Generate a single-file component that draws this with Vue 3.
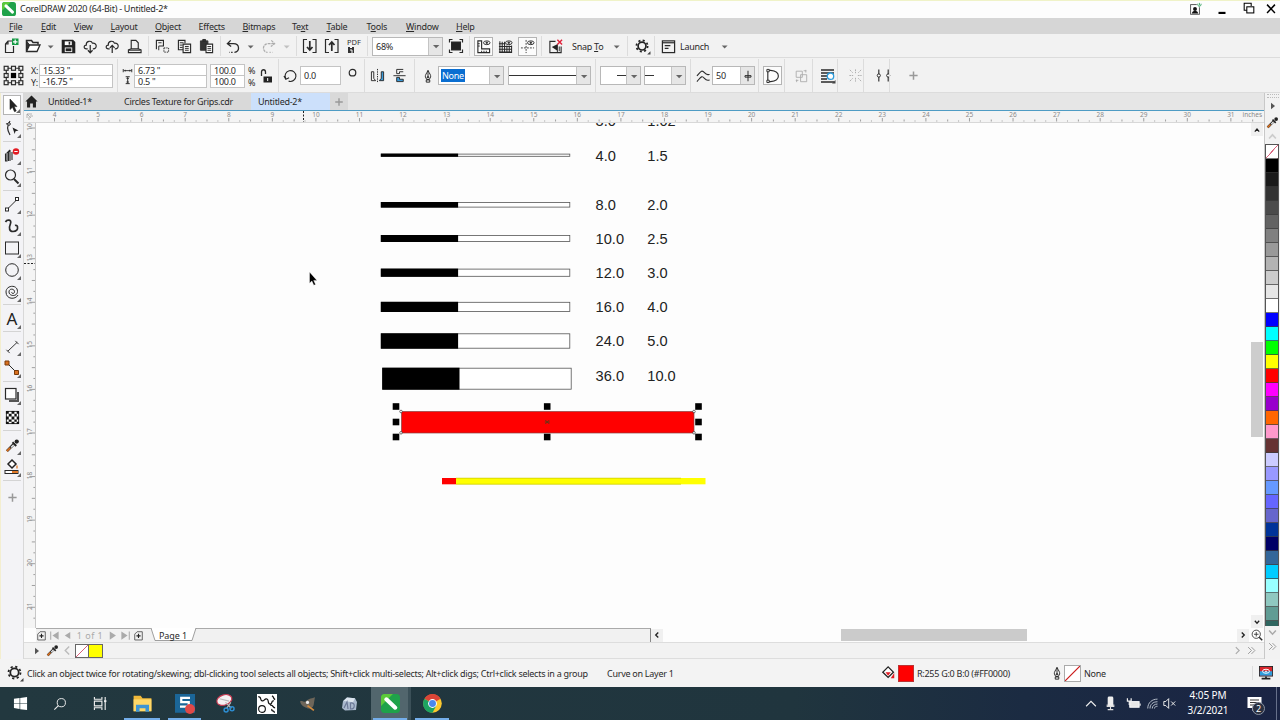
<template>
  <div class="app">
    <header class="titlebar">
      <Icon name="logo" :size="14" />
      <span class="title">CorelDRAW 2020 (64-Bit) - Untitled-2*</span>
      <div class="window-buttons">
        <Icon name="account" :size="14" />
        <Icon name="minimize" :size="14" />
        <Icon name="restore" :size="14" />
        <Icon name="close" :size="14" />
      </div>
    </header>

    <nav class="menubar">
      <span v-for="m in menus" :key="m.text" class="menu-item" :style="{ width: m.w + 'px' }">
        {{ m.text.slice(0, m.key) }}<u>{{ m.text[m.key] }}</u>{{ m.text.slice(m.key + 1) }}
      </span>
    </nav>

    <div v-for="(bar, b) in [standardBar, propertyBar]" :key="b" class="toolbar" :class="{ property: b === 1 }">
      <template v-for="(t, i) in bar" :key="i">
        <i v-if="t.sep" class="sep" :style="{ marginLeft: t.sep[0] + 'px', marginRight: t.sep[1] + 'px' }"></i>
        <div v-else-if="t.combo !== undefined" class="combo" :style="{ width: t.w + 'px' }">
          <span class="combo-value" :class="t.kind"><span>{{ t.combo }}</span></span>
          <span class="combo-button">
            <Icon :name="t.kind === 'spin' ? 'slider' : 'caret'" :size="12" />
          </span>
        </div>
        <div v-else-if="t.pair" class="pair" :class="{ boxed: t.boxed }" :style="{ width: t.w + 'px' }">
          <span v-for="(p, k) in t.pair" :key="k">{{ p }}</span>
        </div>
        <div v-else-if="t.field" class="field" :style="{ width: t.w + 'px' }">{{ t.field }}</div>
        <span v-else-if="t.text" class="bar-text" :style="{ width: t.w + 'px' }">
          {{ t.text.slice(0, t.key) }}<u>{{ t.text[t.key] }}</u>{{ t.text.slice(t.key + 1) }}
        </span>
        <div v-else class="tool" :class="{ on: t.on, off: t.off }" :style="{ width: t.w + 'px' }">
          <Icon v-if="t.icon" :name="t.icon" :size="t.size || 16" />
        </div>
      </template>
    </div>

    <main class="workspace">
      <aside class="toolbox">
        <template v-for="(t, i) in toolbox" :key="i">
          <i v-if="t.sep" class="rule" :style="{ marginTop: t.sep[0] + 'px', marginBottom: t.sep[1] + 'px' }"></i>
          <div v-else class="side-tool" :class="{ picked: t.on, fly: t.fly }">
            <Icon :name="t.icon" :size="t.size || 16" />
          </div>
        </template>
      </aside>

      <section class="document">
        <div class="tabs">
          <Icon class="home" name="home" :size="12" />
          <span class="tab first">Untitled-1*</span>
          <span class="tab second">Circles Texture for Grips.cdr</span>
          <span class="tab active">Untitled-2*</span>
          <span class="tab-add"><Icon name="plus" :size="10" /></span>
        </div>

        <svg class="hruler" viewBox="24 111 1240 12" width="1240" height="12">
          <path d="M24 122.500h1240" stroke="#d8d8d8" />
          <path d="M27 114l4 4M27 118v-4h5M30 116h3M29 117v3" fill="none" stroke="#999" stroke-width="0.7" />
          <path :d="hTicks" stroke="#8a8a8a" stroke-width="0.8" />
          <text v-for="n in hLabels" :key="n.v" :x="n.p" y="117.3" text-anchor="middle">{{ n.v }}</text>
          <text x="1242.500" y="117.3">inches</text>
          <path d="M303.500 111v11" stroke="#222" stroke-dasharray="2 1.500" />
        </svg>

        <div class="view">
          <svg class="vruler" viewBox="24 123 12 505" width="12" height="505">
            <path d="M35.500 123v505" stroke="#c8c8c8" />
            <path :d="vTicks" stroke="#8a8a8a" stroke-width="0.8" />
            <text
              v-for="n in vLabels"
              :key="n.v"
              :transform="`translate(31.500 ${n.p - 1}) rotate(-90)`"
              text-anchor="middle"
            >{{ n.v }}</text>
            <path d="M24 263.500h11" stroke="#222" stroke-dasharray="2 1.500" />
          </svg>

          <svg class="canvas" viewBox="36 123 1215 505" width="1215" height="505">
            <g v-for="r in rows" :key="r.label">
              <template v-if="r.h">
                <rect :x="r.x + 0.5" :y="r.y + 0.5" width="188.500" :height="r.h - 1" fill="#fff" stroke="#555" stroke-width="0.8" />
                <rect :x="r.x" :y="r.y" width="77.300" :height="r.h" fill="#000" />
              </template>
              <text x="595.600" :y="r.base">{{ r.label }}</text>
              <text x="647.300" :y="r.base">{{ r.size }}</text>
            </g>

            <rect x="401.500" y="411.500" width="292.500" height="21.500" fill="#f00" stroke="#8a4040" stroke-width="0.7" />
            <g v-for="y in [406.5, 422, 437]" :key="y">
              <template v-for="x in [396, 547.2, 698.500]" :key="x">
                <rect v-if="!(x === 547.2 && y === 422)" :x="x - 3.3" :y="y - 3.3" width="6.600" height="6.600" fill="#000" />
              </template>
            </g>
            <g v-for="y in [411.5, 432.8]" :key="'n' + y" fill="#fff" stroke="#222" stroke-width="0.6">
              <circle cx="401" :cy="y" r="1.300" />
              <circle cx="694" :cy="y" r="1.300" />
            </g>
            <path d="M545.300 420l4 4M549.300 420l-4 4M544.800 422h5" stroke="#5a3a1a" stroke-width="0.9" />

            <rect x="442" y="478" width="14" height="6.300" fill="#f00" />
            <rect x="456" y="478" width="249.500" height="6.300" fill="#ff0" />
            <path d="M456 478.200h225M456 484.200h225" stroke="#c9c900" stroke-width="0.7" />

            <path d="M309.500 272v11.200l2.400-2.200 1.900 4.300 1.800-.8-1.900-4.100h3.300z" fill="#000" stroke="#fff" stroke-width="0.4" />
          </svg>

          <div class="vscroll">
            <span class="scroll-button"><Icon name="up" :size="10" /></span>
            <span class="vthumb"></span>
            <span class="scroll-button"><Icon name="down" :size="10" /></span>
          </div>
        </div>

        <div class="bottom-row">
          <div class="pager">
            <Icon name="addPage" :size="11" />
            <Icon name="first" :size="11" />
            <Icon name="prev" :size="11" />
            <span class="page-count">1 of 1</span>
            <Icon name="next" :size="11" />
            <Icon name="last" :size="11" />
            <Icon name="addPage" :size="11" />
            <div class="page-tab">
              <svg viewBox="0 0 46 14" width="46" height="14">
                <path d="M0 0L4 12.500H41L45 0" fill="#fff" stroke="#888" stroke-width="0.8" />
              </svg>
              <span>Page 1</span>
            </div>
          </div>
          <div class="hscroll">
            <span class="scroll-button"><Icon name="left" :size="10" /></span>
            <span class="hthumb"></span>
            <span class="scroll-button right"><Icon name="right" :size="10" /></span>
            <Icon name="zoomPage" :size="12" />
          </div>
        </div>

        <div class="doc-palette">
          <Icon name="play" :size="8" />
          <Icon name="dropper" :size="13" />
          <Icon name="chevLeft" :size="9" />
          <span class="chip none"></span>
          <span class="chip yellow"></span>
          <div class="doc-palette-end">
            <Icon name="chevRight" :size="9" />
            <Icon name="chevRight2" :size="9" />
          </div>
        </div>
      </section>

      <aside class="palette">
        <i class="grip"></i>
        <Icon name="play" :size="8" />
        <Icon class="pal-dropper" name="dropper" :size="13" />
        <Icon name="chevUp" :size="9" />
        <div class="swatches">
          <span class="swatch none"></span>
          <span v-for="c in colors" :key="c" class="swatch" :style="{ background: c }"></span>
        </div>
        <Icon name="chevDown" :size="9" />
        <Icon class="more" name="chevRight2" :size="9" />
      </aside>
    </main>

    <footer class="status">
      <Icon name="gear" :size="16" />
      <span class="hint">Click an object twice for rotating/skewing; dbl-clicking tool selects all objects; Shift+click multi-selects; Alt+click digs; Ctrl+click selects in a group</span>
      <span class="selection">Curve on Layer 1</span>
      <div class="fill-info">
        <Icon name="fill" :size="14" />
        <span class="fill-chip"></span>
        <span class="fill-text">R:255 G:0 B:0 (#FF0000)</span>
      </div>
      <div class="outline-info">
        <Icon name="pen" :size="14" />
        <span class="outline-chip"></span>
        <span>None</span>
      </div>
      <div class="proof"><Icon name="monitor" :size="14" /></div>
    </footer>

    <div class="taskbar">
      <div v-for="a in apps" :key="a.icon" class="task" :class="{ open: a.open, current: a.current }" :style="{ width: a.w + 'px' }">
        <Icon :name="a.icon" :size="a.size" />
      </div>
      <div class="tray">
        <Icon name="trayUp" :size="12" />
        <Icon name="mic" :size="15" />
        <Icon name="battery" :size="15" />
        <Icon name="wifi" :size="12" />
        <Icon name="mute" :size="13" />
      </div>
      <div class="clock"><span>4:05 PM</span><span>3/2/2021</span></div>
      <div class="notes">
        <Icon name="note" :size="16" />
        <span class="badge">2</span>
      </div>
      <i class="desktop-edge"></i>
    </div>
  </div>
</template>

<script setup>
import { h } from 'vue'

// Inner markup of every glyph, drawn on a 16 unit grid
const icons = {
  logo: '<rect x="0" y="0" width="16" height="16" rx="3" fill="#1fa24a" stroke="none"/><path d="M0 3a3 3 0 0 1 3-3h7L0 10z" fill="#5cc93a" stroke="none"/><path d="M4.500 4.500l7.500 7" stroke="#fff" stroke-width="3.500" stroke-linecap="round"/>',
  account: '<rect x="3" y="3" width="10" height="11" stroke="#444"/><path d="M4.500 13c0-4 7-4 7 0z" fill="#111" stroke="none"/><circle cx="8" cy="8" r="2.200" fill="#111" stroke="none"/><path d="M10 1v5h5V3z" fill="#fff" stroke="none"/><path d="M11 2c0 4 4 4 4 0M13 1v3" stroke="#2a9d5a"/>',
  minimize: '<path d="M4 12.500h8" stroke="#000" stroke-width="2.500"/>',
  restore: '<path d="M5.500 9.500h-3v-8h8v3" stroke="#000" stroke-width="1.200"/><rect x="5.500" y="5.500" width="8" height="7" stroke="#000" stroke-width="1.200"/>',
  close: '<path d="M3.500 3l9 9.500M12.500 3l-9 9.500" stroke="#000" stroke-width="1.700"/>',
  caret: '<path d="M4 6.500h8.500L8.200 11z" fill="#666" stroke="none"/>',
  newDoc: '<path d="M10 3H5L2.500 6v8.500h8V8M5 3v3H2.500" stroke-width="1.200"/><rect x="9" y="0.500" width="6.500" height="6.500" fill="#149a44" stroke="none"/><path d="M12.200 1.500v4.500M10 3.800h4.500" stroke="#fff" stroke-width="1.200"/>',
  open: '<path d="M1.500 13V2.500h5L8 4.500h5V6.500" stroke-width="1.500"/><path d="M1.500 3v10l3-6z" fill="#333"/><path d="M1.500 13.500L4.500 7H15l-3 6.500z" fill="#fff" stroke-width="1.300"/>',
  save: '<path d="M1.500 1.500h11l2 2v11h-13z" fill="#222" stroke="#222" stroke-width="1.500"/><rect x="4" y="2.500" width="7.500" height="4" fill="#fff" stroke="none"/><rect x="4.500" y="9.500" width="7" height="4" fill="#222" stroke="#fff" stroke-width="0.900"/><path d="M9 3v3" stroke-width="1.700"/>',
  cloudDown: '<path d="M5 10.500H3.500c-3 0-3-4 0-4C3 2 9 1 10 4.500c5-1 5.500 6 1 6H10.500" stroke-width="1.200"/><path d="M7.700 6.500v8M5.200 12l2.500 2.700 2.500-2.700" stroke-width="1.300"/>',
  cloudUp: '<path d="M5 10.500H3.500c-3 0-3-4 0-4C3 2 9 1 10 4.500c5-1 5.500 6 1 6H10.500" stroke-width="1.200"/><path d="M7.700 15V7M5.200 9.500l2.500-2.700 2.500 2.700" stroke-width="1.300"/>',
  print: '<path d="M4.500 10.500v-9h5L12 4v6.500M1.500 14.500v-3l3-1h7.500l3 1v3z" stroke-width="1.200"/><path d="M2 12h12.500"/>',
  cut: '<path d="M1.500 11V1.500H9v6H4" stroke-width="1.200"/><path d="M3.500 4h3.500M4 7.500V12" /><rect x="9.500" y="9.500" width="5" height="4.500" stroke-dasharray="1.500 1"/>',
  copy: '<path d="M6.500 11.500h-5V1.500h7v3" stroke-width="1.200"/><path d="M3 4h4M3 6.500h3M3 9h3"/><path d="M6.500 5.500h8v9h-8z" stroke-width="1.200"/><path d="M8.500 8h4M8.500 10h4M8.500 12h4"/>',
  paste: '<path d="M1.500 2h8v10h-8z" fill="#333" stroke="#333"/><path d="M4 0.500h3v2H4z" fill="#333"/><path d="M7.500 5.500h7v9h-7z" fill="#fff" stroke-width="1.200"/><path d="M9 8h4M9 10h4M9 12h4"/>',
  undo: '<path d="M5 1.500L1.500 5l4 3M2 5h6c7 0 7 9 1 9.200" stroke-width="1.400"/><path d="M7 14.200H3.500" stroke-dasharray="1.500 1.500" stroke-width="1.300"/>',
  redo: '<path d="M11 1.500L14.500 5l-4 3M14 5H8c-7 0-7 9-1 9.200" stroke-width="1.300" stroke-dasharray="3 0.800"/><path d="M9 14.200h3.500" stroke-dasharray="1.500 1.500"/>',
  importIcon: '<path d="M5 1.500H1.500v13H5M10.500 1.500H14v13h-3.500" stroke-width="1.200"/><path d="M7.800 3v9M5 9l2.800 3L10.500 9" stroke-width="1.700"/>',
  exportIcon: '<path d="M5 1.500H1.500v13H5M10.500 1.500H14v13h-3.500" stroke-width="1.200"/><path d="M7.800 13V4M5 7l2.800-3L10.500 7" stroke-width="1.700"/>',
  pdf: '<text x="1" y="7.200" font-family="Noto Sans" font-size="7.800" letter-spacing="0" fill="#333" stroke="none" textLength="14" lengthAdjust="spacingAndGlyphs">PDF</text><rect x="2" y="9" width="6" height="6" fill="#333" stroke="none"/><path d="M4 12h2v3M4 9.500h2" stroke="#fff"/>',
  full: '<path d="M1.500 4.500v-3h3M11.500 1.500h3v3M14.500 11.500v3h-3M4.500 14.500h-3v-3" stroke-width="1.200"/><rect x="3.500" y="4" width="9" height="8" fill="#222"/>',
  rulers: '<path d="M2 2h4v8.500h8.500v4H2z" stroke-width="1.200"/><path d="M2 5h2M2 7.500h2M6 12.500v2M8.500 12.500v2M11 12.500v2"/><ellipse cx="11.500" cy="4" rx="3.500" ry="2"/><circle cx="11.500" cy="4" r="0.800" fill="#222"/>',
  grid: '<path d="M2 2.500v12h12M4.500 3v11M7 3v11M9.500 7v8M12 7v8M14.500 7v8M1 5h7M1 8h14M1 11h14M1 14h14" stroke-width="1.100"/><ellipse cx="11.500" cy="4" rx="3.500" ry="2" fill="#f2f2f2"/><circle cx="11.500" cy="4" r="0.800" fill="#222"/>',
  guides: '<path d="M1 9.500h14M6.500 1v14" stroke-dasharray="2 1.200" stroke-width="0.900"/><ellipse cx="11.500" cy="4" rx="3.500" ry="2"/><circle cx="11.500" cy="4" r="0.800" fill="#222"/>',
  snapOff: '<path d="M8 2.500H2v12h12V8" stroke-width="1.200"/><path d="M4 8.500l6-3v7z" fill="#222" stroke="none"/><path d="M10 5.500v8.500M12 8v5"/><path d="M10 0.800l5 5M15 0.800l-5 5" stroke="#e0203a" stroke-width="1.500"/>',
  gear: '<circle cx="7.500" cy="7.500" r="4.200" stroke="#222" stroke-width="1.800"/><circle cx="7.500" cy="7.500" r="6" stroke="#222" stroke-width="1.800" stroke-dasharray="2.200 2.510"/><path d="M16.500 13v3.500H13z" fill="#444" stroke="none"/>',
  launch: '<rect x="1.500" y="2" width="13" height="12.500" stroke-width="1.300"/><path d="M1.500 4h13" stroke-width="1.300"/><path d="M4 7h6M4 10h4" stroke-width="1.300"/>',
  origin: '<g stroke-width="0.900"><path d="M3.500 2.500h3M10 2.500h3M3.500 13.500h3M10 13.500h3M2.500 4v3M2.500 9v3M13.500 4v3M13.500 9v3"/><rect x="0.900" y="1" width="3" height="3"/><rect x="6.500" y="1" width="3" height="3"/><rect x="12.100" y="1" width="3" height="3"/><rect x="0.900" y="6.500" width="3" height="3"/><rect x="12.100" y="6.500" width="3" height="3"/><rect x="0.900" y="12" width="3" height="3"/><rect x="6.500" y="12" width="3" height="3"/><rect x="12.100" y="12" width="3" height="3"/></g><rect x="6" y="6" width="4" height="4" fill="#000" stroke="none"/>',
  extents: '<path d="M1.500 0v4M12 0v4M2 2h10M4 1v2M9.500 1v2" stroke-width="1.100"/><path d="M4.500 9.500h5M4.500 18h5M7 10v7.500M5.500 11.500h3M5.500 16h3" stroke-width="1.200"/>',
  lock: '<path d="M2.500 8V4c0-3 4-3 4 0v2" stroke-width="1.300"/><rect x="4.500" y="8.500" width="8.500" height="6" fill="#222" stroke="none"/><path d="M8.700 10v3" stroke="#fff"/>',
  rotate: '<path d="M3 11.500a5.800 5.800 0 1 1 3 2.500M1 8.500l2 3.500 3.500-1.500" stroke-width="1.200"/>',
  degree: '<circle cx="8" cy="5" r="3.500" stroke-width="1.300"/>',
  mirrorH: '<path d="M1.500 4v9.500H6L4 11V4z"/><path d="M14.500 4v9.500H10l2-2.500V4z" fill="#3a9ad9"/><path d="M8 1v14" stroke-dasharray="1.500 1"/>',
  mirrorV: '<path d="M12 1.500H5V6h3V4h4M1.500 8.200h13"/><path d="M12 14.500H5V10h3v2h4z" fill="#3a9ad9"/>',
  pen: '<path d="M8 1.500C6.500 5 4.500 7 5 9l1.500 3h3L11 9c.5-2-1.500-4-3-7.500zM8 2v7M6 12.500h4v2.500H6z" stroke-width="1.100"/><circle cx="8" cy="9.500" r="0.900" fill="#222"/>',
  curves: '<path d="M1 8.500C5 4 6 1.500 9 5s4 1.500 5.500 2M1 14.500c4-4.500 5-7 8-3.500s4 1.500 5.500 2" stroke-width="1.200"/>',
  slider: '<path d="M8 1v14M4 7.500h8v2H4z" stroke-width="1.300"/>',
  closeCurve: '<path d="M3 2.500h3c11 1 11 11 0 12H3z" stroke-width="1.200"/><path d="M2 1.500h2.500V4H2zM2 13h2.500v2.500H2z" fill="#fff"/>',
  order: '<path d="M2.500 2.500h7v7h-7zM7.500 6.500h7v8h-7zM11 2h3M13.500 1v3M2 13h3M3 12v3"/>',
  wrap: '<path d="M1 2h13M1 5h13M1 8h6M1 11h6M1 14h13" stroke-width="1.500"/><circle cx="10.500" cy="8.200" r="3.200" fill="#fff" stroke="#2d9cdb" stroke-width="1.300"/><path d="M15.500 12v3.500H12z" fill="#444" stroke="none"/>',
  burst: '<path d="M2 2l3 3M8 1.500v4M14 2l-3 3M1.500 8h4M10.500 8h4M2 14l3-3M8 10.500v4M14 14l-3-3" stroke-dasharray="1.800 0.800"/>',
  split: '<path d="M3 1.500v13M13 1.500v13" stroke-width="1.200"/><circle cx="3" cy="8" r="1.700" fill="#fff"/><circle cx="13" cy="8" r="1.700" fill="#fff"/>',
  plus: '<path d="M8 2v12M2 8h12" stroke="#999" stroke-width="2.200"/>',
  pick: '<path d="M6 2v10.500l2.500-2.200 2 4.400 1.700-.8-2-4.300H13z" fill="#222" stroke="#222" stroke-width="0.600"/>',
  shape: '<path d="M6 1C3 5 3 10 6 15M2 4l4-1" stroke-width="1.200"/><circle cx="5" cy="4" r="1.300" fill="#fff"/><path d="M8.500 7.500l6 3-3 .8-.8 2.700z" fill="#222" stroke="none"/>',
  crop: '<path d="M6 3L3 6v8h-1.500V6.500M6 3v11M4.500 5v9M8 5v8" stroke-width="1.100"/><circle cx="12" cy="4.500" r="3.200" fill="#e31b23" stroke="none"/><path d="M10.300 4.500h3.400" stroke="#fff"/>',
  zoom: '<circle cx="6.500" cy="6" r="5" stroke-width="1.200"/><path d="M10 10l4.500 4.500" stroke-width="2"/>',
  line: '<path d="M3 13.500L13 3.500"/><rect x="1.500" y="12" width="3" height="3" fill="#fff"/><rect x="11.500" y="1.500" width="3" height="3" fill="#fff"/>',
  freehand: '<path d="M1.500 4C3 1 8 1.500 6.500 5.500c-2 5-1 8 2.500 8 3.500 0 5-2 4.500-4.500-.2-1.500-1.500-2-2.500-1.500" stroke-width="1.700"/>',
  rect: '<rect x="1.500" y="2" width="13" height="12"/>',
  ellipse: '<circle cx="8" cy="8" r="6.300"/>',
  spiral: '<path d="M14 11c-2.500 5-12 4.500-12-3C2 1 13.500 0 13.500 7.500 13.500 13 5 12.500 5 8c0-4 5.500-3.500 5.500-.3 0 2.300-2.800 2.300-2.800.5"/>',
  letter: '<text x="8" y="14" text-anchor="middle" font-family="Noto Sans" font-size="17" letter-spacing="0" fill="#222" stroke="none">A</text>',
  dimension: '<path d="M3 13L13 3.500M1.500 11.500l3.500 3.500M11 2l3.500 3.500"/>',
  connector: '<path d="M4 4l8 8"/><path d="M1 1h4v4H1zM10.500 10.500h4v4h-4z" fill="#d9701f" stroke="#7a3b0a"/>',
  shadow: '<path d="M5 14h9V5" stroke="#555" stroke-width="2"/><rect x="1.500" y="1.500" width="10.500" height="10.500" fill="#fff" stroke-width="1.200"/>',
  checker: '<path d="M1.500 1.500h13v13h-13z" fill="#fff"/><g fill="#111" stroke="none"><path d="M1 1h3v3H1zM7 1h3v3H7zM12.500 1H15v3h-2.500zM4 4h3v3H4zM10 4h2.500v3H10zM1 7h3v3H1zM7 7h3v3H7zM12.500 7H15v3h-2.500zM4 10h3v2.500H4zM10 10h2.500v2.500H10zM1 12.500h3V15H1zM7 12.500h3V15H7zM12.500 12.500H15V15h-2.500z"/></g>',
  dropper: '<path d="M9 7l-7 7" stroke="#333" stroke-width="3"/><path d="M5.500 10.500L2 14" stroke="#d9701f" stroke-width="2"/><path d="M9.500 7l-3 3" stroke="#fff" stroke-width="1.300"/><path d="M8 4.500l4 4" stroke="#222" stroke-width="2"/><circle cx="12.500" cy="3.800" r="2.300" fill="#222" stroke="none"/>',
  bucket: '<path d="M8 1l4 4L8 9 4 5z" fill="#fff" stroke="#222" stroke-width="1.500"/><path d="M13 6.500v3" stroke="#e07a2a" stroke-width="1.300"/><rect x="1" y="11.500" width="13" height="3" fill="#fff"/><path d="M8 12h6v2H8z" fill="#e07a2a" stroke="none"/>',
  home: '<path d="M8 0.500L15.500 8H13.500v7.500H9.700v-5H6.300v5H2.500V8H0.500z" fill="#222" stroke="none"/>',
  up: '<path d="M4.500 10.500L8 6.500l3.500 4" stroke="#222" stroke-width="2"/>',
  down: '<path d="M4.500 6l3.500 4 3.500-4" stroke="#222" stroke-width="2"/>',
  left: '<path d="M10 4L6 8l4 4" stroke="#222" stroke-width="2.200"/>',
  right: '<path d="M6 4l4 4-4 4" stroke="#222" stroke-width="2.200"/>',
  addPage: '<path d="M6 2.500H13.500v12h-11V6z" stroke="#555" stroke-width="1.300"/><path d="M8 5.500v6M5 8.500h6" stroke="#222" stroke-width="1.600"/>',
  first: '<path d="M2.500 2v12" stroke="#aaa" stroke-width="1.500"/><path d="M14 2v12L5 8z" fill="#aaa" stroke="none"/>',
  prev: '<path d="M12 3v10L4 8z" fill="#aaa" stroke="none"/>',
  next: '<path d="M4 2v12l9-6z" fill="#aaa" stroke="none"/>',
  last: '<path d="M13.500 2v12" stroke="#aaa" stroke-width="1.500"/><path d="M2 2v12l9-6z" fill="#aaa" stroke="none"/>',
  zoomPage: '<circle cx="7" cy="7" r="5.500" stroke-width="1.100"/><path d="M11 11l4 4" stroke-width="2"/><path d="M7 4v6M4 7h6" stroke-width="1.100"/>',
  play: '<path d="M4 1.500v13l8-6.500z" fill="#555" stroke="none"/>',
  chevLeft: '<path d="M11 1L4 8l7 7" stroke="#bbb" stroke-width="2.500"/>',
  chevRight: '<path d="M5 2l6 6-6 6" stroke="#aaa" stroke-width="2"/>',
  chevRight2: '<path d="M2 2l6 6-6 6M8 2l6 6-6 6" stroke="#999" stroke-width="1.700"/>',
  chevUp: '<path d="M2 11.500L8 5l6 6.500" stroke="#ccc" stroke-width="3"/>',
  chevDown: '<path d="M2 4.500L8 11l6-6.500" stroke="#aaa" stroke-width="2.700"/>',
  fill: '<path d="M7 1l6 6-6 6-6-6z" fill="#fff" stroke="#222" stroke-width="1.600"/><path d="M4 7h6l-3 4z" fill="#e31b23" stroke="none"/><path d="M14 8v6h-4z" fill="#e31b23" stroke="none"/>',
  monitor: '<rect x="0.500" y="0.500" width="15" height="11" fill="#d8262c" stroke="#222"/><path d="M1 6h14v5H1z" fill="#2d9cdb" stroke="none"/><ellipse cx="8" cy="6" rx="4" ry="2.300" stroke="#fff" stroke-width="1.100"/><circle cx="8" cy="6" r="1" fill="#fff" stroke="none"/><path d="M3 14.500h10M8 12v3" stroke="#222" stroke-width="2"/>',
  windows: '<path d="M1 3l6-.9v5.500H1zM7.700 2L15 1v6.600H7.700zM1 8.300h6v5.500l-6-.9zM7.700 8.300H15V15l-7.300-1z" fill="#fff" stroke="none"/>',
  search: '<circle cx="9.500" cy="6.500" r="4.700" stroke="#eee" stroke-width="1.100"/><path d="M6.200 9.800L1.500 14.500" stroke="#eee" stroke-width="1.200"/>',
  taskview: '<path d="M1.500 1v2.500h8V1M1.500 15v-2.500h8V15M1.500 5.500h8v5h-8zM13 1v14" stroke="#eee" stroke-width="1.200"/><path d="M11.800 5.500h2.500" stroke="#eee" stroke-width="2"/>',
  explorer: '<path d="M0.500 1.500h6l1.500 2h7.500v11H0.500z" fill="#f0b93a" stroke="none"/><path d="M0.500 4.500h15v10H0.500z" fill="#ffd868" stroke="none"/><path d="M2.500 15V9h11v6h-3v-3H5.500v3z" fill="#3e95d4" stroke="none"/>',
  snagit: '<rect x="0" y="0" width="16" height="15" fill="#1b6698" stroke="none"/><path d="M12 3H5v3.500h6V10H4" stroke="#fff" stroke-width="1.800"/><circle cx="12" cy="12" r="4" fill="#e04848" stroke="none"/>',
  snip: '<ellipse cx="7" cy="5" rx="6.500" ry="4.300" fill="#f5f1f2" stroke="#c83a52" transform="rotate(-18 7 5)"/><path d="M3 4l8 2" stroke="#bbb"/><path d="M8 7l5 5M12.500 7L9 12" stroke="#bbb"/><circle cx="8.500" cy="13.500" r="1.700" stroke="#2d8fd5" stroke-width="1.200"/><circle cx="13.500" cy="12.500" r="1.700" stroke="#2d8fd5" stroke-width="1.200"/>',
  puzzle: '<rect x="0" y="0" width="16" height="16" fill="#fff" stroke="none"/><path d="M1 2c3 0 1 3 3 3.500S6 3 8 4s0 4 2.500 4S11 5 13.500 5.500M12 1.500c2 1 .5 2 2.500 3M10.500 9c3-.5 1.500 2 4 2M12 12c-1 2 2 1 2 3" stroke="#111"/><circle cx="4" cy="12" r="2.700" stroke="#111" stroke-width="0.900"/>',
  gimp: '<path d="M1 6c2-1 3 1 5 0 3-3 7-3 9-4l-1 6c0 4-4 6-7 4C5 11 2 10 1 6z" fill="#6e665a" stroke="none"/><circle cx="8" cy="7" r="1.500" fill="#eee" stroke="none"/><path d="M8 10l6 4.500" stroke="#d58b3c" stroke-width="1.600"/>',
  cube: '<path d="M2 5l4-3.500 8 .8L16 6l-1 8-11 .5L1 12z" fill="#a9b9cd" stroke="none"/><path d="M6 1.500l8 .8-2 4L2.500 5z" fill="#dce5ee" stroke="none"/><path d="M3 12l3-6 1 7M9.500 7c5-1 5 6 0 6z" stroke="#6d7a98" stroke-width="1.200"/>',
  chrome: '<circle cx="8" cy="8" r="7.800" fill="#fbc82f" stroke="none"/><path d="M8 8L1.200 4A7.800 7.800 0 0 1 14.800 4z" fill="#db4437" stroke="none"/><path d="M8 8L1.200 4A7.800 7.800 0 0 0 8 15.800L11 10z" fill="#1da462" stroke="none"/><circle cx="8" cy="8" r="3.700" fill="#fff" stroke="none"/><circle cx="8" cy="8" r="2.900" fill="#4a87ee" stroke="none"/>',
  trayUp: '<path d="M1.500 11L8 4.500l6.500 6.500" stroke="#eee" stroke-width="1.500"/>',
  mic: '<rect x="5" y="0.500" width="6" height="10.500" rx="1.500" fill="#eee" stroke="none"/><path d="M8 11v4M4.500 9v2h7V9M5 14.500h6" stroke="#ddd" stroke-width="1.200"/>',
  battery: '<rect x="4" y="6" width="10" height="6" fill="#e6e6e6" stroke="#fff"/><path d="M15 8v2.500M1.500 2.500v3h4v-3M3.500 5v4h2" stroke="#eee" stroke-width="1.300"/>',
  wifi: '<path d="M1 14C1 6 7 1.500 14 1.500M4 14C4 8.500 8 5 14 5M7 14c0-3.500 3-6 7-6M10 14c0-2 1.500-3 4-3" stroke="#b8c0cc" stroke-width="1.300"/>',
  mute: '<path d="M1 5.500h2.500L7 2v12l-3.500-3.500H1z" stroke="#eee" stroke-width="1.200"/><path d="M10 5.500l5 5M15 5.500l-5 5" stroke="#eee" stroke-width="1.200"/>',
  note: '<path d="M0.500 1h14v11H8l-3 3v-3H0.500z" fill="#fff" stroke="none"/><path d="M3 4h9M3 6.500h9M3 9h7" stroke="#333" stroke-width="1"/>'
}
icons.corel = icons.logo

const Icon = (props) =>
  h('svg', {
    viewBox: '0 0 16 16',
    width: props.size,
    height: props.size,
    fill: 'none',
    stroke: 'currentColor',
    overflow: 'visible',
    innerHTML: icons[props.name]
  })
Icon.props = ['name', 'size']

const menus = [
  { text: 'File', key: 0, w: 32 },
  { text: 'Edit', key: 0, w: 33 },
  { text: 'View', key: 0, w: 36.5 },
  { text: 'Layout', key: 0, w: 44.5 },
  { text: 'Object', key: 0, w: 43.5 },
  { text: 'Effects', key: 4, w: 44 },
  { text: 'Bitmaps', key: 0, w: 49.5 },
  { text: 'Text', key: 2, w: 34.5 },
  { text: 'Table', key: 0, w: 40 },
  { text: 'Tools', key: 1, w: 39.5 },
  { text: 'Window', key: 0, w: 50 },
  { text: 'Help', key: 0, w: 40 }
]

const standardBar = [
  { icon: 'newDoc', w: 22 },
  { icon: 'open', w: 22 },
  { icon: 'caret', w: 13, size: 11 },
  { icon: 'save', w: 22, size: 15 },
  { icon: 'cloudDown', w: 22, size: 15 },
  { icon: 'cloudUp', w: 22, size: 15 },
  { icon: 'print', w: 22, size: 15 },
  { sep: [3, 2] },
  { icon: 'cut', w: 22, size: 15 },
  { icon: 'copy', w: 22, size: 15 },
  { icon: 'paste', w: 22, size: 15 },
  { sep: [3, 1] },
  { icon: 'undo', w: 22, size: 15 },
  { icon: 'caret', w: 13, size: 11 },
  { icon: 'redo', w: 22, size: 15, off: true },
  { icon: 'caret', w: 14, size: 11, off: true },
  { sep: [3, 2] },
  { icon: 'importIcon', w: 22 },
  { icon: 'exportIcon', w: 22 },
  { icon: 'pdf', w: 22 },
  { sep: [2, 4] },
  { combo: '68%', w: 71 },
  { icon: 'full', w: 26 },
  { sep: [0, 4] },
  { icon: 'rulers', w: 19, on: true, size: 15 },
  { icon: 'grid', w: 25, size: 15 },
  { icon: 'guides', w: 19, on: true, size: 15 },
  { sep: [4, 2] },
  { icon: 'snapOff', w: 22, size: 15 },
  { w: 6 },
  { text: 'Snap To', key: 5, w: 37 },
  { icon: 'caret', w: 14, size: 11 },
  { sep: [4, 2] },
  { icon: 'gear', w: 24, size: 15 },
  { sep: [0, 2] },
  { icon: 'launch', w: 22, size: 15 },
  { w: 1 },
  { text: 'Launch', key: 9, w: 37 },
  { icon: 'caret', w: 14, size: 11 }
]

const propertyBar = [
  { w: 3 },
  { icon: 'origin', w: 21, size: 21 },
  { w: 7 },
  { pair: ['X:', 'Y:'], w: 8 },
  { pair: ['15.33 "', '-16.75 "'], w: 74, boxed: true },
  { sep: [4, 4] },
  { icon: 'extents', w: 12, size: 13 },
  { pair: ['6.73 "', '0.5 "'], w: 73, boxed: true },
  { w: 3 },
  { pair: ['100.0', '100.0'], w: 35, boxed: true },
  { w: 3 },
  { pair: ['%', '%'], w: 8 },
  { icon: 'lock', w: 21 },
  { sep: [1, 2] },
  { icon: 'rotate', w: 19, size: 15 },
  { field: '0.0', w: 41 },
  { icon: 'degree', w: 23, size: 15 },
  { sep: [0, 1] },
  { icon: 'mirrorH', w: 22, size: 15 },
  { icon: 'mirrorV', w: 23, size: 15 },
  { sep: [3, 2] },
  { icon: 'pen', w: 21, size: 14 },
  { combo: 'None', w: 66, kind: 'selected' },
  { w: 4 },
  { combo: '', w: 83, kind: 'stroke' },
  { sep: [4, 4] },
  { combo: '', w: 41, kind: 'cap-left' },
  { w: 3 },
  { combo: '', w: 42, kind: 'cap-right' },
  { sep: [4, 4] },
  { icon: 'curves', w: 17, size: 15 },
  { combo: '50', w: 43, kind: 'spin' },
  { sep: [3, 4] },
  { icon: 'closeCurve', w: 19, on: true, size: 15 },
  { sep: [2, 4] },
  { icon: 'order', w: 23, off: true, size: 14 },
  { sep: [0, 6] },
  { icon: 'wrap', w: 18 },
  { sep: [0, 9] },
  { icon: 'burst', w: 16, off: true, size: 15 },
  { sep: [0, 13] },
  { icon: 'split', w: 12, size: 15 },
  { sep: [0, 12] },
  { icon: 'plus', w: 22, size: 11 }
]

const toolbox = [
  { icon: 'pick', on: true, fly: true },
  { icon: 'shape', fly: true },
  { sep: [2, 2] },
  { icon: 'crop', fly: true },
  { icon: 'zoom', fly: true },
  { sep: [2, 2] },
  { icon: 'line', fly: true },
  { icon: 'freehand', fly: true },
  { icon: 'rect', fly: true },
  { icon: 'ellipse', fly: true },
  { icon: 'spiral', fly: true },
  { sep: [1, 3] },
  { icon: 'letter', fly: true },
  { sep: [1, 3] },
  { icon: 'dimension', fly: true, size: 15 },
  { icon: 'connector', fly: true },
  { sep: [2, 2] },
  { icon: 'shadow', fly: true },
  { icon: 'checker', size: 15 },
  { sep: [2, 3] },
  { icon: 'dropper', fly: true, size: 15 },
  { icon: 'bucket', fly: true },
  { sep: [2, 5] },
  { icon: 'plus', size: 11 }
]

const colors = [
  '#000000', '#1a1a1a', '#333333', '#4b4b4b', '#636363', '#808080', '#999999', '#b3b3b3', '#cccccc', '#e6e6e6', '#ffffff',
  '#0000ff', '#00ffff', '#00ff00', '#ffff00', '#ff0000', '#ff00ff', '#9900cc', '#ff6600', '#ff99cc', '#663333',
  '#ccccff', '#9999ff', '#6699ff', '#6666ff', '#6666cc', '#003399', '#000066', '#336699', '#00ccff', '#99ffff',
  '#8fc8c0', '#609c94', '#2f6660'
]

const rows = [
  { label: '3.0', size: '1.02', base: 126.3 },
  { label: '4.0', size: '1.5', x: 380.8, y: 153.6, h: 3.2, base: 160.6 },
  { label: '8.0', size: '2.0', x: 380.8, y: 202, h: 5.6, base: 209.9 },
  { label: '10.0', size: '2.5', x: 380.8, y: 235, h: 7, base: 244.2 },
  { label: '12.0', size: '3.0', x: 380.8, y: 268.6, h: 8.2, base: 278.2 },
  { label: '16.0', size: '4.0', x: 380.8, y: 301.8, h: 10.2, base: 312.3 },
  { label: '24.0', size: '5.0', x: 380.8, y: 333.3, h: 15.4, base: 346.3 },
  { label: '36.0', size: '10.0', x: 382.2, y: 367.7, h: 22, base: 380.6 }
]

// Rulers: one inch spans 43.57 px at this zoom level
const inch = 43.57
const hLabels = Array.from({ length: 28 }, (_, i) => ({ v: i + 4, p: 54.5 + i * inch }))
const vLabels = Array.from({ length: 12 }, (_, i) => ({ v: i + 10, p: 128 + i * inch }))

const tickLength = (q) => (q % 4 === 0 ? 3.5 : q % 2 === 0 ? 2 : 1)
const hTicks = Array.from({ length: 111 }, (_, q) => `M${54.5 + (q * inch) / 4} 121.500v${-tickLength(q)}`).join('')
const vTicks = Array.from({ length: 46 }, (_, q) => `M35 ${128 + (q * inch) / 4}h${-tickLength(q) * 1.6}`).join('')

const apps = [
  { icon: 'windows', w: 40, size: 15 },
  { icon: 'search', w: 40, size: 14 },
  { icon: 'taskview', w: 40, size: 15 },
  { icon: 'explorer', w: 44, size: 19, open: true },
  { icon: 'snagit', w: 41, size: 20, open: true },
  { icon: 'snip', w: 41, size: 19 },
  { icon: 'puzzle', w: 41, size: 20 },
  { icon: 'gimp', w: 41, size: 17 },
  { icon: 'cube', w: 41, size: 16 },
  { icon: 'corel', w: 42, size: 19, open: true, current: true },
  { icon: 'chrome', w: 42, size: 19, open: true }
]
</script>

<style>
body {
  margin: 0;
  overflow: hidden;
}
</style>

<style scoped>
.app {
  display: flex;
  flex-direction: column;
  width: 1280px;
  height: 720px;
  overflow: hidden;
  font-family: 'Noto Sans', sans-serif;
  font-size: 9px;
  letter-spacing: -0.27px;
  color: #2a2a2a;
  background: #f2f2f2;
  box-sizing: border-box;
  white-space: nowrap;
}

.app * {
  box-sizing: border-box;
}

svg {
  display: block;
  flex: none;
}

u {
  text-decoration: underline;
  text-underline-offset: 1px;
}

.titlebar {
  display: flex;
  align-items: center;
  height: 18px;
  flex: none;
  padding: 0 2px 2px 2px;
  border-top: 1px solid #f0f3c8;
  background: #fdfdfd;
}

.title {
  margin-left: 4px;
}

.window-buttons {
  display: flex;
  gap: 13px;
  margin-left: auto;
}

.window-buttons svg:last-child {
  margin-left: -5px;
}

.menubar {
  display: flex;
  align-items: center;
  flex: none;
  height: 16px;
  padding-left: 9px;
  background: #d6d6d6;
}

.menu-item {
  flex: none;
}

.toolbar {
  display: flex;
  align-items: center;
  flex: none;
  height: 24px;
  padding-top: 1px;
  border-bottom: 1px solid #dcdcdc;
}

.toolbar.property {
  height: 35px;
}

.sep {
  flex: none;
  width: 1px;
  height: 20px;
  background: #dcdcdc;
}

.property .sep {
  height: 33px;
}

.tool {
  display: flex;
  align-items: center;
  justify-content: center;
  flex: none;
  height: 19px;
}

.tool.on {
  border: 1px solid #b4b4b4;
  background: #fcfcfc;
}

.tool.off {
  opacity: 0.35;
}

.bar-text {
  flex: none;
}

.combo {
  display: flex;
  flex: none;
  height: 19px;
  border: 1px solid #b8b8b8;
  background: #fff;
}

.combo-value {
  display: flex;
  align-items: center;
  flex: 1;
  padding-left: 3px;
}

.selected span {
  margin-left: -1px;
  padding: 0 1px;
  background: #0a6ed1;
  color: #fff;
}

.combo-value.stroke,
.combo-value.cap-left,
.combo-value.cap-right {
  padding-left: 0;
}

.stroke::after,
.cap-left::after,
.cap-right::after {
  content: '';
  width: 100%;
  height: 1px;
  background: #333;
}

.cap-left {
  justify-content: flex-end;
}

.cap-left::after,
.cap-right::after {
  width: 9px;
}

.combo-button {
  display: flex;
  align-items: center;
  justify-content: center;
  width: 14px;
  border-left: 1px solid #c4c4c4;
  background: #e6e6e6;
}

.pair {
  flex: none;
  line-height: 13px;
}

.pair span {
  display: block;
  height: 12px;
}

.pair.boxed span {
  padding-left: 3px;
  border: 1px solid #c4c4c4;
  background: #fff;
  line-height: 11px;
}

.pair.boxed span + span {
  border-top: 0;
}

.field {
  flex: none;
  height: 19px;
  padding-left: 3px;
  border: 1px solid #c4c4c4;
  background: #fff;
  line-height: 18px;
}

.workspace {
  display: flex;
  flex: none;
  height: 566px;
}

.toolbox {
  flex: none;
  width: 24px;
  padding: 2px 2px 0 2px;
  border-left: 1px solid #f3eed0;
  border-right: 1px solid #d8d8d8;
  background: #f3f3f6;
}

.rule {
  display: block;
  height: 1px;
  background: #d4d4d4;
}

.side-tool {
  position: relative;
  display: flex;
  align-items: center;
  justify-content: center;
  height: 22px;
}

.side-tool.picked {
  border: 1px solid #b4b4b4;
  background: #fff;
  height: 20px;
  margin-bottom: 2px;
}

.side-tool.fly::after {
  content: '';
  position: absolute;
  right: 0;
  bottom: 1px;
  border: 2px solid #666;
  border-top-color: transparent;
  border-left-color: transparent;
}

.document {
  display: flex;
  flex-direction: column;
  flex: none;
  width: 1240px;
}

.tabs {
  display: flex;
  align-items: center;
  flex: none;
  height: 18px;
  border-bottom: 1px solid #4f9cc4;
  background: #e6e6e6;
}

.home {
  width: 15px;
  height: 17px;
  padding: 2px 1px;
  background: #d9d9d9;
}

.tab {
  height: 17px;
  line-height: 18px;
  background: #d9d9d9;
}

.tab.first {
  width: 76px;
  padding-left: 9px;
}

.tab.second {
  width: 136px;
  padding-left: 9px;
}

.tab.active {
  width: 79px;
  padding-left: 7px;
  background: #cce0fb;
}

.tab-add {
  display: flex;
  align-items: center;
  justify-content: center;
  width: 18px;
  height: 17px;
  background: #d9d9d9;
}

.hruler,
.vruler {
  background: #f4f4f4;
}

.hruler text,
.vruler text {
  font: 6.5px 'Noto Sans', sans-serif;
  letter-spacing: 0;
  fill: #8a8a8a;
}

.view {
  display: flex;
  height: 505px;
  flex: none;
}

.canvas {
  background: #fdfdfd;
}

.canvas text {
  font: 14.6px 'Liberation Sans', Arial, sans-serif;
  letter-spacing: 0;
  fill: #222;
}

.vscroll {
  display: flex;
  flex-direction: column;
  justify-content: space-between;
  width: 13px;
  background: #fdfdfd;
}

.scroll-button {
  display: flex;
  align-items: center;
  justify-content: center;
  width: 12px;
  height: 13px;
  background: #f0f0f0;
}

.vthumb {
  width: 12px;
  height: 95px;
  margin-top: 28px;
  background: #cdcdcd;
}

.bottom-row {
  display: flex;
  flex: none;
  height: 15px;
  border-bottom: 1px solid #ddd;
  background: #fdfdfd;
}

.pager {
  display: flex;
  align-items: center;
  width: 615px;
  margin-left: 12px;
  border-top: 1px solid #aaa;
  border-right: 1px solid #888;
  background: #f1f1f1;
  gap: 2px;
}

.page-count {
  width: 30px;
  text-align: center;
  color: #aaa;
  letter-spacing: 0.5px;
}

.page-tab {
  position: relative;
  margin-left: 5px;
}

.page-tab svg {
  margin-top: -1px;
}

.page-tab span {
  position: absolute;
  left: 8px;
  top: 0;
  line-height: 13px;
  letter-spacing: -0.1px;
}

.hscroll {
  display: flex;
  align-items: center;
  flex: 1;
}

.hthumb {
  width: 186px;
  height: 12px;
  margin-left: 178px;
  background: #cbcbcb;
}

.scroll-button.right {
  margin-left: auto;
  margin-right: 2px;
}

.hscroll > svg {
  margin-right: 1px;
}

.doc-palette {
  display: flex;
  align-items: center;
  height: 17px;
  padding-left: 9px;
  border-bottom: 1px solid #ddd;
  background: #f2f2f2;
}

.doc-palette > svg {
  margin-right: 4px;
}

.doc-palette > svg:first-child {
  margin-right: 5px;
}

.chip {
  width: 14px;
  height: 14px;
  border: 1px solid #666;
}

.chip.none {
  margin-left: -1px;
}

.chip + .chip {
  border-left: 0;
}

.none {
  background: linear-gradient(to top left, #fff 47%, #d8607a 48%, #d8607a 52%, #fff 53%);
}

.yellow {
  background: #ff0;
}

.doc-palette-end {
  display: flex;
  gap: 5px;
  margin-left: auto;
  margin-right: 8px;
}

.palette {
  display: flex;
  flex-direction: column;
  align-items: center;
  width: 16px;
  border-left: 1px solid #c8c8c8;
  background: #f2f2f2;
}

.grip {
  width: 12px;
  height: 4px;
  margin: 1px 0 4px;
  border-top: 1px dotted #bbb;
  border-bottom: 1px dotted #bbb;
}

.pal-dropper {
  margin-top: 6px;
}

.pal-dropper + svg {
  margin: 3px 0;
}

.swatches {
  align-self: flex-start;
  width: 14px;
  height: 482px;
  overflow: hidden;
  border: 1px solid #555;
  border-bottom: 0;
  flex: none;
}

.swatch {
  display: block;
  height: 14px;
  border-bottom: 1px solid rgba(60, 60, 60, 0.7);
}

.swatches + svg {
  margin-top: 2px;
}

.more {
  margin-top: 5px;
}

.status {
  display: flex;
  align-items: center;
  flex: none;
  height: 28px;
  padding-left: 7px;
  background: #f3f3f3;
}

.hint {
  flex: none;
  width: 580px;
  margin-left: 4px;
}

.selection {
  width: 275px;
}

.fill-info,
.outline-info {
  display: flex;
  align-items: center;
}

.fill-info {
  width: 168px;
}

.fill-chip {
  width: 16px;
  height: 17px;
  margin: 0 3px 0 2px;
  border: 1px solid #b33;
  background: #f00;
}

.outline-info {
  width: 202px;
}

.outline-chip {
  width: 17px;
  height: 17px;
  margin: 0 3px 0 0;
  border: 1px solid #aaa;
  background: linear-gradient(to top left, #fff 46%, #c22 48%, #c22 52%, #fff 54%);
}

.proof {
  padding-left: 6px;
  border-left: 1px solid #ddd;
}

.taskbar {
  display: flex;
  align-items: stretch;
  flex: none;
  height: 33px;
  background: linear-gradient(to right, #22383f 0%, #20353e 62%, #1b2b42 80%, #1a2444 100%);
}

.task {
  position: relative;
  display: flex;
  align-items: center;
  justify-content: center;
}

.task.current {
  background: linear-gradient(to right, transparent 2px, #52666d 2px, #52666d 39px, #3b5058 39px);
}

.task.open::after {
  content: '';
  position: absolute;
  left: 4px;
  right: 4px;
  bottom: 0;
  height: 2px;
  background: #74aeea;
}

.tray {
  display: flex;
  align-items: center;
  margin-left: auto;
  gap: 6px;
}

.tray svg:last-child {
  margin-left: -2px;
}

.tray svg:nth-child(3) {
  margin-left: 2px;
}

.clock {
  display: flex;
  flex-direction: column;
  align-items: center;
  width: 64px;
  padding-top: 1px;
  color: #fff;
  font-size: 10px;
  line-height: 15px;
  letter-spacing: -0.1px;
}

.notes {
  position: relative;
  width: 36px;
  padding: 9px 0 0 7px;
}

.badge {
  position: absolute;
  left: 12px;
  top: 15px;
  width: 13px;
  height: 13px;
  border: 1px solid #8b93a3;
  border-radius: 50%;
  background: #2a3040;
  color: #fff;
  text-align: center;
  line-height: 11px;
  letter-spacing: 0;
}

.desktop-edge {
  width: 4px;
  border-left: 1px solid #66708a;
}
</style>
